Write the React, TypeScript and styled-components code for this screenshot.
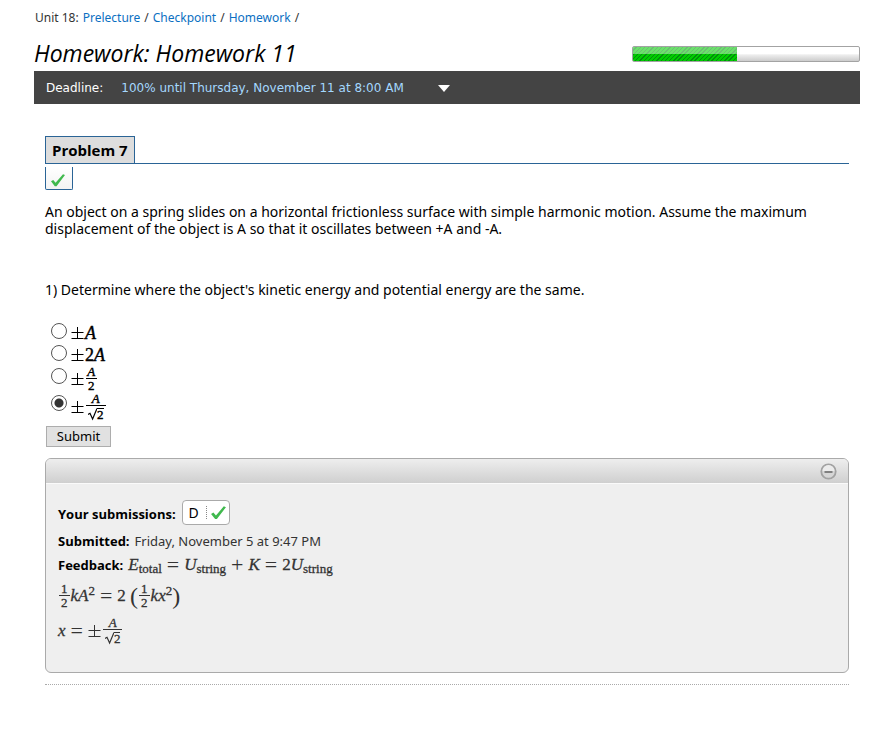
import React, { useState } from "react";
import styled, { createGlobalStyle } from "styled-components";

const Global = createGlobalStyle`
  * { box-sizing: border-box; }
  body {
    margin: 0;
    background: #fff;
    color: #000;
    font-family: "Trebuchet MS", "Noto Sans", sans-serif;
    font-size: 14px;
    line-height: 17px;
  }
`;

const Page = styled.main`
  padding: 9px 34px 40px;
`;

const Breadcrumb = styled.nav`
  display: flex;
  gap: 4px;
  padding-left: 1px;
  font-size: 12px;
  line-height: 18px;
  color: #333;
  a { color: #0b6fc2; text-decoration: none; }
`;

const TitleRow = styled.header`
  display: flex;
  justify-content: space-between;
  align-items: flex-start;
  height: 44px;
  padding-top: 11px;
`;

const Title = styled.h1`
  margin: 0;
  font-family: "Trebuchet MS", "Open Sans", sans-serif;
  font-size: 23px;
  line-height: 30px;
  font-weight: 400;
  font-style: italic;
`;

const Progress = styled.div`
  width: 228px;
  height: 16px;
  margin-top: 8px;
  border: 1px solid #a3a3a3;
  border-radius: 2px;
  overflow: hidden;
  background: linear-gradient(#fff 0 50%, #eee 55%, #ccc);
`;

const ProgressFill = styled.div`
  height: 100%;
  background:
    linear-gradient(rgba(255, 255, 255, 0.42) 0 50%, transparent 50%),
    repeating-linear-gradient(135deg, #00cc00 0 2px, #008f0c 2px 3px);
`;

const DeadlineBar = styled.section`
  display: flex;
  align-items: center;
  gap: 18px;
  height: 33px;
  padding: 2px 12px 0;
  background: #444;
  color: #fff;
  font-family: Verdana, "DejaVu Sans", sans-serif;
  font-size: 12px;
`;

const DeadlineText = styled.span`
  color: #a4d8ff;
`;

const ArrowButton = styled.button`
  display: flex;
  margin-left: 10px;
  padding: 6px;
  border: 0;
  background: none;
`;

const Content = styled.section`
  padding: 32px 11px 0;
`;

const TabRow = styled.div`
  display: flex;
  border-bottom: 1px solid #2a6496;
`;

const Tab = styled.h2`
  margin: 0;
  padding: 0 6px;
  border: 1px solid #2a6496;
  border-bottom: 0;
  background: #ddd;
  font-family: "Trebuchet MS", "Open Sans", sans-serif;
  font-size: 15px;
  line-height: 26px;
  font-weight: 700;
`;

const CheckBadge = styled.div`
  display: flex;
  align-items: center;
  justify-content: center;
  width: 28px;
  height: 23px;
  margin-top: 3px;
  padding: 3px 2px 0 0;
  border: 1px solid #2a6496;
  border-top: 0;
  border-radius: 0 0 2px 2px;
  background: linear-gradient(#fff, #f3f3f3);
`;

const Paragraph = styled.p`
  margin: 13px 0 0;
`;

const Question = styled.p`
  margin: 44px 0 0;
`;

const Choices = styled.form`
  display: flex;
  flex-direction: column;
  align-items: flex-start;
  margin-top: 23px;
  padding-left: 1px;
`;

const Choice = styled.label<{ $height: number }>`
  display: flex;
  align-items: flex-start;
  gap: 4px;
  height: ${(p) => p.$height}px;
  padding-left: 5px;
`;

const Radio = styled.input`
  appearance: none;
  flex: none;
  width: 16px;
  height: 16px;
  margin: 2px 0 0;
  border: 1px solid #555;
  border-radius: 50%;
  background: #fff;
  &:checked {
    background: radial-gradient(circle, #333 0 4px, #fff 5px);
  }
`;

const Submit = styled.button`
  width: 65px;
  height: 21px;
  padding: 0;
  border: 1px solid #adadad;
  background: #e1e1e1;
  color: #000;
  font-family: Tahoma, "Noto Sans", sans-serif;
  font-size: 13px;
  line-height: 19px;
`;

const Panel = styled.section`
  margin-top: 11px;
  border: 1px solid #aaa;
  border-radius: 6px;
  background: #efefef;
  overflow: hidden;
`;

const PanelHeader = styled.div`
  display: flex;
  justify-content: flex-end;
  align-items: center;
  height: 25px;
  padding-right: 11px;
  border-bottom: 1px solid #fafafa;
  background: linear-gradient(#eee, #cfcfcf);
`;

const CollapseButton = styled.button`
  display: flex;
  padding: 0;
  border: 0;
  background: none;
`;

const PanelBody = styled.div`
  padding: 16px 12px 25px;
  color: #333;
  font-size: 13px;
`;

const Line = styled.div<{ $height: number }>`
  display: flex;
  align-items: center;
  gap: 5px;
  height: ${(p) => p.$height}px;
  b {
    color: #000;
    font-family: "Trebuchet MS", "Open Sans", sans-serif;
  }
`;

const Answer = styled.span`
  display: flex;
  align-items: center;
  align-self: flex-start;
  height: 25px;
  margin-left: 1px;
  padding: 0 2px 0 6px;
  border: 1px solid #aaa;
  border-radius: 4px;
  background: #fff;
  color: #000;
  font-size: 14px;
`;

const Divider = styled.i`
  height: 13px;
  margin: 0 3px 0 7px;
  border-left: 1px dotted #888;
`;

const Footer = styled.div`
  margin-top: 11px;
  border-top: 1px dotted #aaa;
`;

const MathText = styled.span<{ $strong?: boolean }>`
  display: inline-flex;
  align-items: center;
  min-height: 24px;
  font-family: "Liberation Serif", serif;
  font-size: ${(p) => (p.$strong ? 18 : 17)}px;
  line-height: 20px;
  white-space: pre;
  -webkit-text-stroke: ${(p) => (p.$strong ? "0.4px" : "0.3px")} currentColor;
  sub, sup { font-size: 13px; line-height: 0; }
  sub { vertical-align: -3px; }
  sup { vertical-align: 6px; }
`;

const Operator = styled.span`
  margin: 0 5px;
  font-size: 22px;
  line-height: 0;
  vertical-align: -2px;
  -webkit-text-stroke: 0;
`;

const Fraction = styled.span`
  display: inline-flex;
  flex-direction: column;
  align-items: center;
  margin: 0 1px;
  font-size: 13px;
  line-height: 12px;
`;

const Denominator = styled.span`
  display: flex;
  justify-content: center;
  align-self: stretch;
  padding: 1px 2px 0;
  border-top: 1px solid currentColor;
`;

const Radicand = styled.span`
  margin-top: 1px;
  border-top: 1px solid currentColor;
  line-height: 12px;
`;

const Paren = styled.span`
  font-size: 24px;
  -webkit-text-stroke: 0;
`;

const Sign = styled.span`
  display: inline-flex;
  width: 14px;
`;

function Check({ size }: { size: number }) {
  return (
    <svg width={size} height={size} viewBox="0 0 16 16" aria-label="Correct">
      <path d="M1 9.3 3.2 8l2.4 2.8L13 2.2l2 .8L6.5 14.2H4.8z" fill="#40b94e" />
    </svg>
  );
}

function PlusMinus() {
  return (
    <Sign>
      <svg width="13" height="13" viewBox="0 0 13 13" role="img" aria-label="plus or minus">
        <path d="M.5 5.5h12M6.5 0v11M.5 11.5h12" fill="none" stroke="currentColor" />
      </svg>
    </Sign>
  );
}

function Root() {
  return (
    <>
      <svg width="9" height="14" viewBox="0 0 9 14" aria-label="square root">
        <path d="M0 7.5 2 6.3 4.6 12 9 1.5" fill="none" stroke="currentColor" strokeWidth="1.2" />
      </svg>
      <Radicand>2</Radicand>
    </>
  );
}

function Frac({ top, children }: { top: React.ReactNode; children: React.ReactNode }) {
  return (
    <Fraction>
      <span>{top}</span>
      <Denominator>{children}</Denominator>
    </Fraction>
  );
}

const choices = [
  { id: "A", height: 22, math: <><PlusMinus /><i>A</i></> },
  { id: "B", height: 23, math: <><PlusMinus />2<i>A</i></> },
  { id: "C", height: 27, math: <><PlusMinus /><Frac top={<i>A</i>}>2</Frac></> },
  { id: "D", height: 33, math: <><PlusMinus /><Frac top={<i>A</i>}><Root /></Frac></> },
];

export default function App() {
  const [selected, setSelected] = useState("D");
  const progress = 46;

  return (
    <>
      <Global />
      <Page>
        <Breadcrumb>
          <span>Unit 18:</span>
          <a href="#prelecture">Prelecture</a>
          <span>/</span>
          <a href="#checkpoint">Checkpoint</a>
          <span>/</span>
          <a href="#homework">Homework</a>
          <span>/</span>
        </Breadcrumb>
        <TitleRow>
          <Title>Homework: Homework 11</Title>
          <Progress role="progressbar" aria-valuenow={progress} aria-label="Homework progress">
            <ProgressFill style={{ width: `${progress}%` }} />
          </Progress>
        </TitleRow>
        <DeadlineBar>
          <span>Deadline:</span>
          <DeadlineText>100% until Thursday, November 11 at 8:00 AM</DeadlineText>
          <ArrowButton aria-label="Show deadlines">
            <svg width="12" height="7" viewBox="0 0 12 7"><path d="M0 0h12L6 7z" fill="#fff" /></svg>
          </ArrowButton>
        </DeadlineBar>
        <Content>
          <TabRow><Tab>Problem 7</Tab></TabRow>
          <CheckBadge><Check size={16} /></CheckBadge>
          <Paragraph>
            An object on a spring slides on a horizontal frictionless surface with simple harmonic motion. Assume the maximum displacement of the object is A so that it oscillates between +A and -A.
          </Paragraph>
          <Question>1) Determine where the object's kinetic energy and potential energy are the same.</Question>
          <Choices onSubmit={(e) => e.preventDefault()}>
            {choices.map((c) => (
              <Choice key={c.id} $height={c.height}>
                <Radio type="radio" name="answer" checked={selected === c.id} onChange={() => setSelected(c.id)} />
                <MathText $strong>{c.math}</MathText>
              </Choice>
            ))}
            <Submit type="submit">Submit</Submit>
          </Choices>
          <Panel>
            <PanelHeader>
              <CollapseButton aria-label="Collapse">
                <svg width="17" height="17" viewBox="0 0 17 17">
                  <circle cx="8.5" cy="8.5" r="7.2" fill="#d6d6d6" stroke="#a2a2a2" strokeWidth="1.8" />
                  <path d="M2.5 8a6 6 0 0 1 12 0z" fill="#ececec" />
                  <path d="M4.5 9h8" stroke="#808080" strokeWidth="2" />
                </svg>
              </CollapseButton>
            </PanelHeader>
            <PanelBody>
              <Line $height={29}>
                <b>Your submissions:</b>
                <Answer>D<Divider /><Check size={17} /></Answer>
              </Line>
              <Line $height={24}><b>Submitted:</b><span>Friday, November 5 at 9:47 PM</span></Line>
              <Line $height={24}>
                <b>Feedback:</b>
                <MathText>
                  <span>
                    <i>E</i><sub>total</sub><Operator>=</Operator><i>U</i><sub>string</sub><Operator>+</Operator><i>K</i><Operator>=</Operator>2<i>U</i><sub>string</sub>
                  </span>
                </MathText>
              </Line>
              <Line $height={38}>
                <MathText>
                  <Frac top="1">2</Frac>
                  <span><i>kA</i><sup>2</sup><Operator>=</Operator>2 </span>
                  <Paren>(</Paren>
                  <Frac top="1">2</Frac>
                  <span><i>kx</i><sup>2</sup></span>
                  <Paren>)</Paren>
                </MathText>
              </Line>
              <Line $height={32}>
                <MathText>
                  <span><i>x</i><Operator>=</Operator></span><PlusMinus /><Frac top={<i>A</i>}><Root /></Frac>
                </MathText>
              </Line>
            </PanelBody>
          </Panel>
          <Footer />
        </Content>
      </Page>
    </>
  );
}
